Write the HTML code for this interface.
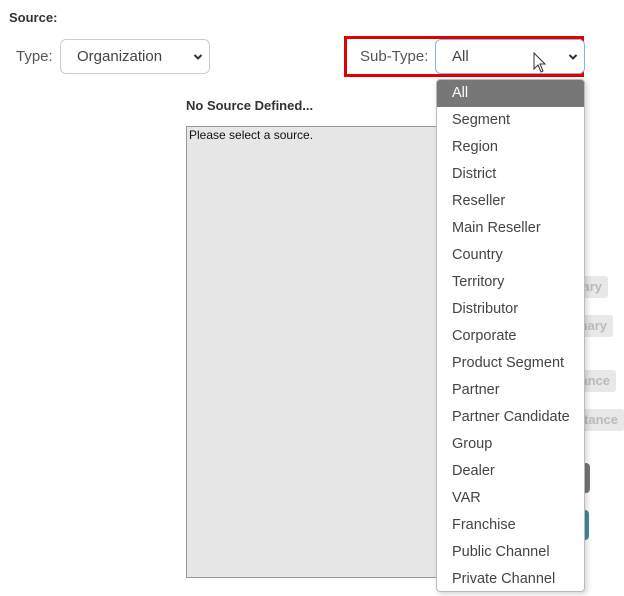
<!DOCTYPE html>
<html><head><meta charset="utf-8"><style>
body{margin:0;width:624px;height:596px;background:#fff;font-family:"Liberation Sans",sans-serif;color:#333;position:relative;overflow:hidden}
.a{position:absolute}
.sel{border:1px solid #ccc;border-radius:6px;background:#fff;font-size:15px;color:#444;box-sizing:border-box}
.chev{position:absolute;right:6px;top:13px}
.btn{position:absolute;background:#e8e8e8;border-radius:3px;color:#bbb;font-size:13px;font-weight:bold;line-height:22px;height:22px;text-align:right;padding-right:6px;box-sizing:border-box}
.dd{left:436px;top:79px;width:149px;height:513px;background:#fff;border:1px solid #bbb;border-radius:4px;box-shadow:2px 2px 6px rgba(0,0,0,.18);box-sizing:border-box}
.dd div{height:27px;line-height:26px;padding-left:15px;font-size:14.5px;color:#444}
.dd div.h{background:#777;color:#fff;border-radius:3px 3px 0 0}
</style></head><body>
<div class="a" style="left:9px;top:10px;font-size:13px;font-weight:bold">Source:</div>
<div class="a" style="left:16px;top:48px;font-size:15px;color:#555">Type:</div>
<div class="a sel" style="left:60px;top:39px;width:150px;height:35px;line-height:33px;padding-left:16px">Organization<svg class="chev" width="10" height="8" viewBox="0 0 10 8"><path d="M1.5 2 L5 5.5 L8.5 2" fill="none" stroke="#333" stroke-width="2"/></svg></div>
<div class="a" style="left:344px;top:36px;width:234px;height:35px;border:3px solid #e00000"></div>
<div class="a" style="left:360px;top:48px;font-size:15px;color:#555">Sub-Type:</div>
<div class="a sel" style="left:435px;top:39px;width:150px;height:35px;line-height:33px;padding-left:16px;border-color:#8ab4e0">All<svg class="chev" width="10" height="8" viewBox="0 0 10 8"><path d="M1.5 2 L5 5.5 L8.5 2" fill="none" stroke="#333" stroke-width="2"/></svg></div>
<svg class="a" style="left:533px;top:52px" width="14" height="22" viewBox="0 0 14 22"><path d="M1 1 L1 17 L5 13 L8 20 L10 19 L7 12 L12 12 Z" fill="#fff" stroke="#333" stroke-width="1"/></svg>
<div class="a" style="left:186px;top:98px;font-size:13px;font-weight:bold">No Source Defined...</div>
<div class="a" style="left:186px;top:126px;width:260px;height:452px;background:#e6e6e6;border:1px solid #999;box-sizing:border-box;font-size:12px;color:#111;padding:1px 2px">Please select a source.</div>
<div class="btn" style="left:560px;top:276px;width:48px">ary</div>
<div class="btn" style="left:560px;top:315px;width:53px">nary</div>
<div class="btn" style="left:560px;top:370px;width:56px">ance</div>
<div class="btn" style="left:560px;top:409px;width:64px">tance</div>
<div class="a" style="left:570px;top:463px;width:20px;height:30px;background:#777;border-radius:4px"></div>
<div class="a" style="left:570px;top:510px;width:19px;height:30px;background:#4a8a98;border-radius:4px"></div>
<div class="a dd">
<div class="h">All</div><div>Segment</div><div>Region</div><div>District</div><div>Reseller</div><div>Main Reseller</div><div>Country</div><div>Territory</div><div>Distributor</div><div>Corporate</div><div>Product Segment</div><div>Partner</div><div>Partner Candidate</div><div>Group</div><div>Dealer</div><div>VAR</div><div>Franchise</div><div>Public Channel</div><div>Private Channel</div>
</div>
</body></html>
